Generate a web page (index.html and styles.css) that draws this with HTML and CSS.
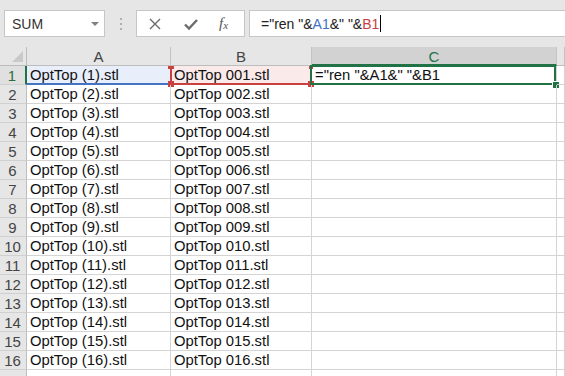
FILE: index.html
```html
<!DOCTYPE html>
<html>
<head>
<meta charset="utf-8">
<link rel="stylesheet" href="styles.css">
</head>
<body>
<div class="app">
  <div class="topbar">
    <div class="namebox"><span class="name">SUM</span><span class="caret"></span></div>
    <div class="dots"><i></i><i></i><i></i></div>
    <div class="iconbox">
      <svg class="ic" width="14" height="14" viewBox="0 0 14 14"><path d="M2 2 L12 12 M12 2 L2 12" stroke="#6b6b6b" stroke-width="1.4" fill="none"/></svg>
      <svg class="ic" width="16" height="14" viewBox="0 0 16 14"><path d="M2 7.5 L6 11.5 L14 3" stroke="#6b6b6b" stroke-width="2.4" fill="none"/></svg>
      <span class="fx">f<sub>x</sub></span>
    </div>
    <div class="formula">="ren "&amp;<span class="ra">A1</span>&amp;" "&amp;<span class="rb">B1</span><span class="cursor"></span></div>
  </div>
  <div class="sheet">
    <div class="corner"><span class="tri"></span></div>
    <div class="ch">A</div>
    <div class="ch">B</div>
    <div class="ch sel">C</div>
    <div class="ch"></div>

    <div class="rh sel">1</div>
    <div class="c refa">OptTop (1).stl</div>
    <div class="c refb">OptTop 001.stl<span class="h h1"></span><span class="h h2"></span><span class="h h3"></span><span class="h h4"></span></div>
    <div class="c active">="ren "&amp;A1&amp;" "&amp;B1<span class="fill"></span></div>
    <div class="c"></div>

    <div class="rh">2</div><div class="c">OptTop (2).stl</div><div class="c">OptTop 002.stl</div><div class="c"></div><div class="c"></div>
    <div class="rh">3</div><div class="c">OptTop (3).stl</div><div class="c">OptTop 003.stl</div><div class="c"></div><div class="c"></div>
    <div class="rh">4</div><div class="c">OptTop (4).stl</div><div class="c">OptTop 004.stl</div><div class="c"></div><div class="c"></div>
    <div class="rh">5</div><div class="c">OptTop (5).stl</div><div class="c">OptTop 005.stl</div><div class="c"></div><div class="c"></div>
    <div class="rh">6</div><div class="c">OptTop (6).stl</div><div class="c">OptTop 006.stl</div><div class="c"></div><div class="c"></div>
    <div class="rh">7</div><div class="c">OptTop (7).stl</div><div class="c">OptTop 007.stl</div><div class="c"></div><div class="c"></div>
    <div class="rh">8</div><div class="c">OptTop (8).stl</div><div class="c">OptTop 008.stl</div><div class="c"></div><div class="c"></div>
    <div class="rh">9</div><div class="c">OptTop (9).stl</div><div class="c">OptTop 009.stl</div><div class="c"></div><div class="c"></div>
    <div class="rh">10</div><div class="c">OptTop (10).stl</div><div class="c">OptTop 010.stl</div><div class="c"></div><div class="c"></div>
    <div class="rh">11</div><div class="c">OptTop (11).stl</div><div class="c">OptTop 011.stl</div><div class="c"></div><div class="c"></div>
    <div class="rh">12</div><div class="c">OptTop (12).stl</div><div class="c">OptTop 012.stl</div><div class="c"></div><div class="c"></div>
    <div class="rh">13</div><div class="c">OptTop (13).stl</div><div class="c">OptTop 013.stl</div><div class="c"></div><div class="c"></div>
    <div class="rh">14</div><div class="c">OptTop (14).stl</div><div class="c">OptTop 014.stl</div><div class="c"></div><div class="c"></div>
    <div class="rh">15</div><div class="c">OptTop (15).stl</div><div class="c">OptTop 015.stl</div><div class="c"></div><div class="c"></div>
    <div class="rh">16</div><div class="c">OptTop (16).stl</div><div class="c">OptTop 016.stl</div><div class="c"></div><div class="c"></div>
    <div class="rh"></div><div class="c"></div><div class="c"></div><div class="c"></div><div class="c"></div>
  </div>
</div>
</body>
</html>
```
FILE: styles.css
```css
* { box-sizing: border-box; }
html, body { margin: 0; padding: 0; }
body {
  width: 565px;
  height: 376px;
  overflow: hidden;
  background: #e6e6e6;
  font-family: "Liberation Sans", Arial, sans-serif;
}
.app { width: 565px; height: 376px; overflow: hidden; }

.topbar {
  height: 47px;
  display: flex;
  align-items: flex-start;
  padding-top: 10px;
  padding-left: 4px;
  background: #e6e6e6;
}
.namebox {
  width: 101px;
  height: 27px;
  background: #fff;
  border: 1px solid #c6c6c6;
  display: flex;
  align-items: center;
  justify-content: space-between;
  padding: 0 5px 0 7px;
}
.name { font-size: 14px; color: #333; padding-top: 1px; }
.caret {
  width: 0; height: 0;
  border-left: 4px solid transparent;
  border-right: 4px solid transparent;
  border-top: 4px solid #808080;
  margin-top: 1px;
}
.dots {
  width: 31px;
  height: 27px;
  display: flex;
  flex-direction: column;
  align-items: center;
  justify-content: center;
  gap: 3px;
}
.dots i { display: block; width: 2px; height: 2px; background: #b0b0b0; }
.iconbox {
  width: 109px;
  height: 27px;
  background: #fff;
  border: 1px solid #c6c6c6;
  display: flex;
  align-items: center;
  padding-left: 11px;
}
.iconbox .ic:first-child { margin-right: 21px; }
.iconbox .ic:nth-child(2) { margin-right: 20px; }
.fx {
  font-family: "Liberation Serif", "Times New Roman", serif;
  font-style: italic;
  font-size: 15px;
  color: #555;
  line-height: 1;
}
.fx sub { font-size: 11px; vertical-align: -1px; }
.formula {
  flex: 1;
  height: 27px;
  margin-left: 4px;
  margin-right: -4px;
  background: #fff;
  border: 1px solid #c6c6c6;
  border-right: none;
  display: flex;
  align-items: center;
  padding-left: 11px;
  font-size: 14px;
  color: #222;
  white-space: pre;
}
.ra { color: #4472c4; }
.rb { color: #c8413f; }
.cursor { display: inline-block; width: 1px; height: 17px; background: #000; margin-left: 1px; }

.sheet {
  display: grid;
  grid-template-columns: 27px 144px 141px 245px 1fr;
  grid-template-rows: 19px;
  grid-auto-rows: 19px;
  background: #fff;
}
.corner, .ch, .rh {
  background: #e6e6e6;
  color: #444;
}
.corner {
  border-right: 1px solid #bdbdbd;
  border-bottom: 1px solid #bdbdbd;
  position: relative;
}
.tri {
  position: absolute;
  right: 3px; bottom: 3px;
  width: 0; height: 0;
  border-left: 11px solid transparent;
  border-bottom: 11px solid #c9c9c9;
}
.ch {
  border-right: 1px solid #c3c3c3;
  border-bottom: 1px solid #bdbdbd;
  font-size: 15px;
  text-align: center;
  line-height: 19px;
}
.ch.sel {
  background: #d2d2d2;
  color: #217346;
  border-bottom: 2px solid #217346;
}
.rh {
  border-right: 1px solid #bdbdbd;
  border-bottom: 1px solid #d0d0d0;
  font-size: 15px;
  text-align: center;
  line-height: 19px;
  padding-right: 1px;
}
.rh.sel {
  background: #e0e0e0;
  color: #2f6e3a;
  border-right: 2px solid #217346;
}
.c {
  border-right: 1px solid #d4d4d4;
  border-bottom: 1px solid #d4d4d4;
  font-size: 14.8px;
  color: #111;
  line-height: 19px;
  padding-left: 3px;
  white-space: nowrap;
  overflow: visible;
  position: relative;
}
.refa {
  background: #e8eefa;
  border-bottom: 2px solid #4472c4;
  border-right: 1px solid #b9c9e8;
  line-height: 17px;
  padding-top: 1px;
}
.refb {
  background: #fbeaea;
  border-left: 2px solid #c8413f;
  border-bottom: 2px solid #c8413f;
  margin-left: -1px;
  line-height: 17px;
  padding-top: 1px;
  padding-left: 2px;
}
.h { position: absolute; background: #c8413f; }
.h1 { left: -4px; top: 0; width: 6px; height: 3px; }
.h2 { left: -4px; bottom: -4px; width: 6px; height: 6px; }
.h3 { right: -2px; top: 0; width: 4px; height: 3px; }
.h4 { right: -3px; bottom: -4px; width: 6px; height: 6px; }
.active { padding-left: 3px; }
.active::before {
  content: "";
  position: absolute;
  top: -1px; left: -2px; right: 0; bottom: -1px;
  border: 2px solid #217346;
  pointer-events: none;
}
.fill {
  position: absolute;
  right: -3px; bottom: -4px;
  width: 6px; height: 6px;
  background: #217346;
  outline: 1px solid #fff;
}
```
